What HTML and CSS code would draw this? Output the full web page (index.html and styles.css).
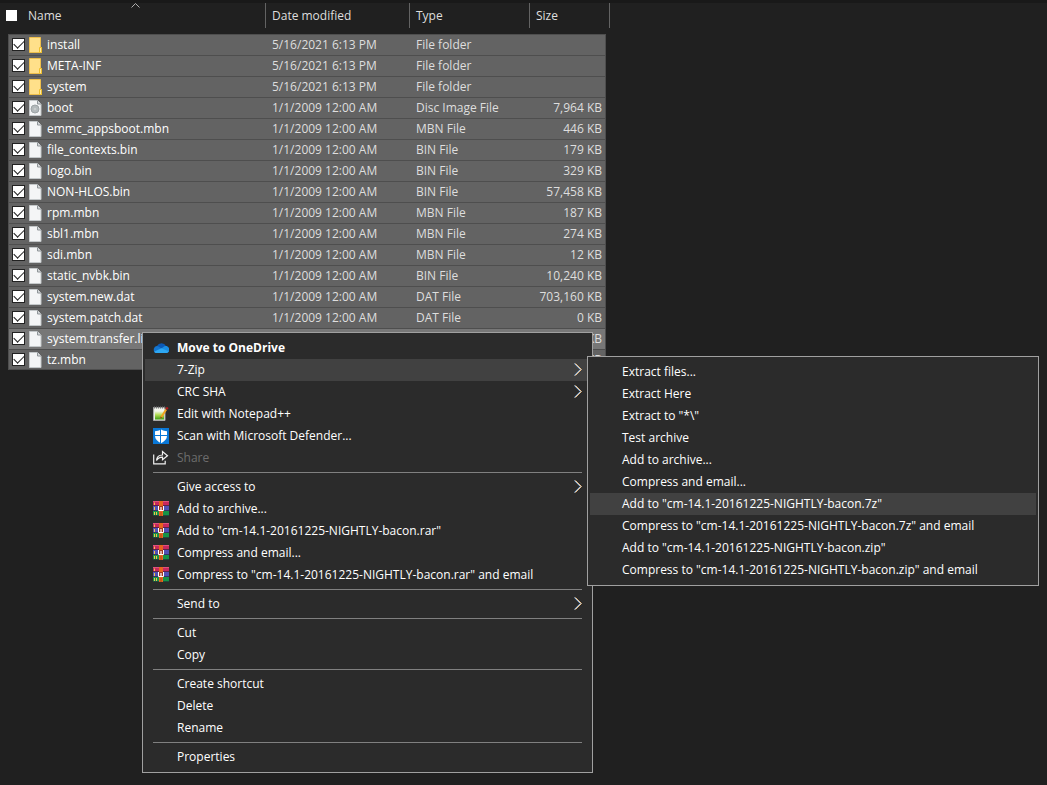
FILE: index.html
```
<!DOCTYPE html>
<html lang="en">
<head>
<meta charset="utf-8">
<title>File list</title>
<link rel="stylesheet" href="styles.css">
</head>
<body>
<svg class="sprite" aria-hidden="true">
  <symbol id="folder" viewBox="0 0 13 16">
    <path d="M.5.5h11v9.500l1 .8v4.700H.5z" fill="#ffe08a" stroke="#eebf4c"/>
    <path d="M10.500 10.500h2v5h-2z" fill="#ffe9a8" stroke="#eebf2c"/>
  </symbol>
  <symbol id="file" viewBox="0 0 13 16">
    <path d="M.5.5h8l3.500 3.500v11.500H.5z" fill="#f4f5f6" stroke="#c4c8ca"/>
    <path d="M8.500.5v3.500H12" fill="#d5d8da" stroke="#8f9598"/>
  </symbol>
  <symbol id="disc" viewBox="0 0 13 16">
    <use href="#file" width="13" height="16"/>
    <circle cx="6" cy="9" r="4" fill="#b3b9bb" stroke="#9da3a5"/>
    <circle cx="6" cy="9" r="1.300" fill="#c8cccd"/>
  </symbol>
  <symbol id="onedrive" viewBox="0 0 16 16">
    <path d="M4 6a5 5 0 0 1 9 0l-5 3-5-1z" fill="#0c59b5"/>
    <path d="M3.500 13A3.400 3.400 0 1 1 5 6.200L11 10z" fill="#1476d1"/>
    <path d="M8 8.800 11 6.400c2-1 3.700-.2 4 .7A3.200 3.200 0 0 1 13.500 13z" fill="#1b8de2"/>
    <path d="M1 11.800 8.300 8.300l7.200 3c-.3 1.100-1 1.700-2 1.700h-10c-1 0-2-.400-2.500-1.200z" fill="#2ea7f2"/>
  </symbol>
  <symbol id="notepad" viewBox="0 0 16 16">
    <linearGradient id="page" x2="0" y2="1">
      <stop offset=".2" stop-color="#f4f6ee"/>
      <stop offset=".55" stop-color="#b4dd55"/>
      <stop offset="1" stop-color="#3f9a12"/>
    </linearGradient>
    <path d="M.5 1.500h11.500v13H.5z" fill="#e9eee4" stroke="#a8a8a8"/>
    <path d="M2 3h9v10.500H2z" fill="url(#page)"/>
    <path d="M1 1.500h11" stroke="#777" stroke-width="2" stroke-dasharray="1 1"/>
    <path d="m7.500 10.500 4.800-7.500 1.700 1-4.800 7.500-2 1.300z" fill="#f0a31d"/>
    <path d="m7.500 10.500 1.700 1-2 1.300z" fill="#7a4b18"/>
    <path d="m12.500 2.700 1.200-1.900 1.900 1.100-1.300 1.900z" fill="#b81b1b"/>
  </symbol>
  <symbol id="defender" viewBox="0 0 16 16">
    <path d="M0 0h16v16H0z" fill="#0a78d7"/>
    <path d="M8 1.500c2 1.300 4 1.700 6 1.700V8c0 3-2.500 5.500-6 7.200C4.500 13.500 2 11 2 8V3.200c2 0 4-.4 6-1.700z" fill="#fff"/>
    <path d="M7.500 1v15M1 7.500h14" stroke="#0a78d7"/>
  </symbol>
  <symbol id="share" viewBox="0 0 16 16">
    <path d="M.7 4.500v9.300h11.500v-3M3.500 10.500c.3-4 2.700-5.500 6-5.500V1.500l5 4.200-5 4V7.200c-2.500 0-4.500.8-6 3.300z" fill="none" stroke="#f0f0f0" stroke-width="1.200"/>
  </symbol>
  <symbol id="rar" viewBox="0 0 16 16">
    <path d="M0 0h16v5H0z" fill="#c8285e"/>
    <path d="M0 5h16v5H0z" fill="#5150b4"/>
    <path d="M0 10h16v5H0z" fill="#169447"/>
    <path d="M0 .5h16" stroke="#e0527c"/>
    <path d="M0 4.500h16M0 9.500h16M0 14.500h16" stroke="#23223c" stroke-opacity=".65"/>
    <path d="M1.500 1.500V4M1.500 6v3M1.500 11v3M3.500 11v3" stroke="#f3c34c"/>
    <path d="M6 0h4v15H6z" fill="#e8641f"/>
    <path d="M5 5h6v5H5z" fill="#a33a20"/>
    <path d="M5.500 5v4.500h5V5" fill="none" stroke="#fff"/>
    <path d="M8 6v3" stroke="#fff" stroke-width="1.200"/>
    <path d="M8 11v4" stroke="#a84a17"/>
  </symbol>
  <symbol id="chevron" viewBox="0 0 8 14">
    <path d="m.3.500 6 6-6 6" fill="none" stroke="#5aa0e8"/>
    <path d="m1.500.500 6 6-6 6" fill="none" stroke="#f0a850"/>
    <path d="m.9.500 6 6-6 6" fill="none" stroke="#f4f4f4" stroke-width=".8"/>
  </symbol>
  <symbol id="sort" viewBox="0 0 9 5">
    <path d="m.5 4.500 4-4 4 4" fill="none" stroke="#b0b0b0"/>
  </symbol>
</svg>

<main class="explorer">
<table class="files">
  <colgroup><col class="c-edge"><col class="c-name"><col class="c-date"><col class="c-type"><col class="c-size"><col class="c-end"></colgroup>
  <thead>
    <tr>
      <th colspan="2" scope="col"><div class="head-name"><input class="all" type="checkbox" aria-label="Select all">Name<svg class="sort"><use href="#sort"/></svg></div></th>
      <th scope="col">Date modified</th>
      <th scope="col">Type</th>
      <th scope="col" colspan="2">Size</th>
    </tr>
  </thead>
  <tbody>
    <tr><td></td><td><label class="entry"><input class="tick" type="checkbox" checked><svg class="kind"><use href="#folder"/></svg>install</label></td><td>5/16/2021 6:13 PM</td><td>File folder</td><td></td><td></td></tr>
    <tr><td></td><td><label class="entry"><input class="tick" type="checkbox" checked><svg class="kind"><use href="#folder"/></svg>META-INF</label></td><td>5/16/2021 6:13 PM</td><td>File folder</td><td></td><td></td></tr>
    <tr><td></td><td><label class="entry"><input class="tick" type="checkbox" checked><svg class="kind"><use href="#folder"/></svg>system</label></td><td>5/16/2021 6:13 PM</td><td>File folder</td><td></td><td></td></tr>
    <tr><td></td><td><label class="entry"><input class="tick" type="checkbox" checked><svg class="kind"><use href="#disc"/></svg>boot</label></td><td>1/1/2009 12:00 AM</td><td>Disc Image File</td><td>7,964 KB</td><td></td></tr>
    <tr><td></td><td><label class="entry"><input class="tick" type="checkbox" checked><svg class="kind"><use href="#file"/></svg>emmc_appsboot.mbn</label></td><td>1/1/2009 12:00 AM</td><td>MBN File</td><td>446 KB</td><td></td></tr>
    <tr><td></td><td><label class="entry"><input class="tick" type="checkbox" checked><svg class="kind"><use href="#file"/></svg>file_contexts.bin</label></td><td>1/1/2009 12:00 AM</td><td>BIN File</td><td>179 KB</td><td></td></tr>
    <tr><td></td><td><label class="entry"><input class="tick" type="checkbox" checked><svg class="kind"><use href="#file"/></svg>logo.bin</label></td><td>1/1/2009 12:00 AM</td><td>BIN File</td><td>329 KB</td><td></td></tr>
    <tr><td></td><td><label class="entry"><input class="tick" type="checkbox" checked><svg class="kind"><use href="#file"/></svg>NON-HLOS.bin</label></td><td>1/1/2009 12:00 AM</td><td>BIN File</td><td>57,458 KB</td><td></td></tr>
    <tr><td></td><td><label class="entry"><input class="tick" type="checkbox" checked><svg class="kind"><use href="#file"/></svg>rpm.mbn</label></td><td>1/1/2009 12:00 AM</td><td>MBN File</td><td>187 KB</td><td></td></tr>
    <tr><td></td><td><label class="entry"><input class="tick" type="checkbox" checked><svg class="kind"><use href="#file"/></svg>sbl1.mbn</label></td><td>1/1/2009 12:00 AM</td><td>MBN File</td><td>274 KB</td><td></td></tr>
    <tr><td></td><td><label class="entry"><input class="tick" type="checkbox" checked><svg class="kind"><use href="#file"/></svg>sdi.mbn</label></td><td>1/1/2009 12:00 AM</td><td>MBN File</td><td>12 KB</td><td></td></tr>
    <tr><td></td><td><label class="entry"><input class="tick" type="checkbox" checked><svg class="kind"><use href="#file"/></svg>static_nvbk.bin</label></td><td>1/1/2009 12:00 AM</td><td>BIN File</td><td>10,240 KB</td><td></td></tr>
    <tr><td></td><td><label class="entry"><input class="tick" type="checkbox" checked><svg class="kind"><use href="#file"/></svg>system.new.dat</label></td><td>1/1/2009 12:00 AM</td><td>DAT File</td><td>703,160 KB</td><td></td></tr>
    <tr><td></td><td><label class="entry"><input class="tick" type="checkbox" checked><svg class="kind"><use href="#file"/></svg>system.patch.dat</label></td><td>1/1/2009 12:00 AM</td><td>DAT File</td><td>0 KB</td><td></td></tr>
    <tr class="focus"><td></td><td><label class="entry"><input class="tick" type="checkbox" checked><svg class="kind"><use href="#file"/></svg>system.transfer.list</label></td><td></td><td></td><td>KB</td><td></td></tr>
    <tr><td></td><td><label class="entry"><input class="tick" type="checkbox" checked><svg class="kind"><use href="#file"/></svg>tz.mbn</label></td><td></td><td></td><td>KB</td><td></td></tr>
  </tbody>
</table>
</main>

<div class="menu context" role="menu">
  <button class="item default" role="menuitem"><svg class="icon"><use href="#onedrive"/></svg><span>Move to OneDrive</span></button>
  <button class="item active" role="menuitem"><span>7-Zip</span><svg class="more"><use href="#chevron"/></svg></button>
  <button class="item" role="menuitem"><span>CRC SHA</span><svg class="more"><use href="#chevron"/></svg></button>
  <button class="item" role="menuitem"><svg class="icon"><use href="#notepad"/></svg><span>Edit with Notepad++</span></button>
  <button class="item" role="menuitem"><svg class="icon"><use href="#defender"/></svg><span>Scan with Microsoft Defender...</span></button>
  <button class="item" role="menuitem" disabled><svg class="icon"><use href="#share"/></svg><span>Share</span></button>
  <hr>
  <button class="item" role="menuitem"><span>Give access to</span><svg class="more"><use href="#chevron"/></svg></button>
  <button class="item" role="menuitem"><svg class="icon"><use href="#rar"/></svg><span>Add to archive...</span></button>
  <button class="item" role="menuitem"><svg class="icon"><use href="#rar"/></svg><span>Add to "cm-14.1-20161225-NIGHTLY-bacon.rar"</span></button>
  <button class="item" role="menuitem"><svg class="icon"><use href="#rar"/></svg><span>Compress and email...</span></button>
  <button class="item" role="menuitem"><svg class="icon"><use href="#rar"/></svg><span>Compress to "cm-14.1-20161225-NIGHTLY-bacon.rar" and email</span></button>
  <hr>
  <button class="item" role="menuitem"><span>Send to</span><svg class="more"><use href="#chevron"/></svg></button>
  <hr>
  <button class="item" role="menuitem"><span>Cut</span></button>
  <button class="item" role="menuitem"><span>Copy</span></button>
  <hr>
  <button class="item" role="menuitem"><span>Create shortcut</span></button>
  <button class="item" role="menuitem"><span>Delete</span></button>
  <button class="item" role="menuitem"><span>Rename</span></button>
  <hr>
  <button class="item" role="menuitem"><span>Properties</span></button>
</div>

<div class="menu submenu" role="menu">
  <button class="item" role="menuitem"><span>Extract files...</span></button>
  <button class="item" role="menuitem"><span>Extract Here</span></button>
  <button class="item" role="menuitem"><span>Extract to "*\"</span></button>
  <button class="item" role="menuitem"><span>Test archive</span></button>
  <button class="item" role="menuitem"><span>Add to archive...</span></button>
  <button class="item" role="menuitem"><span>Compress and email...</span></button>
  <button class="item active" role="menuitem"><span>Add to "cm-14.1-20161225-NIGHTLY-bacon.7z"</span></button>
  <button class="item" role="menuitem"><span>Compress to "cm-14.1-20161225-NIGHTLY-bacon.7z" and email</span></button>
  <button class="item" role="menuitem"><span>Add to "cm-14.1-20161225-NIGHTLY-bacon.zip"</span></button>
  <button class="item" role="menuitem"><span>Compress to "cm-14.1-20161225-NIGHTLY-bacon.zip" and email</span></button>
</div>
</body>
</html>
```
FILE: styles.css
```
* { box-sizing: border-box; }

body {
  margin: 0;
  min-height: 100vh;
  background: #202020;
  color: #fff;
  font: 12px/16px "Open Sans", "Noto Sans", sans-serif;
}

.sprite { position: absolute; width: 0; height: 0; }

.explorer { border-top: 3px solid #191919; }

.files {
  width: 610px;
  table-layout: fixed;
  border-collapse: separate;
  border-spacing: 0;
}
.c-edge { width: 8px; }
.c-name { width: 258px; }
.c-date { width: 144px; }
.c-type { width: 120px; }
.c-size { width: 76px; }
.c-end { width: 4px; }

.files th {
  height: 25px;
  padding: 0 6px;
  border-right: 1px solid #636363;
  font-weight: 400;
  text-align: left;
  color: #dedede;
}
.head-name { display: flex; align-items: center; gap: 11px; position: relative; }
.sort { position: absolute; left: 125px; top: -5px; width: 9px; height: 5px; }

.files thead::after { content: ""; display: block; height: 6px; }

.files td {
  height: 21px;
  padding: 0 6px;
  background: #636363;
  border-top: 1px solid #4e4e4e;
  color: #dedede;
  white-space: nowrap;
}
.files td:nth-child(2) { padding: 0 3px; border-left: 1px solid #4e4e4e; overflow: hidden; }
.files td:nth-child(5) { padding: 0 3px; border-right: 1px solid #4e4e4e; text-align: right; }
.files td:first-child, .files td:last-child { padding: 0; background: none; border: 0; }
.files .focus td:not(:first-child, :last-child) { background: #777; }
.files tbody tr:last-child td:not(:first-child, :last-child) { border-bottom: 1px solid #4e4e4e; }

.entry { display: flex; align-items: center; color: #fff; }
.kind { width: 13px; height: 16px; margin: 0 5px 0 4px; flex: none; }

.all, .tick { appearance: none; margin: 0; flex: none; background: #fff; }
.all { width: 11px; height: 11px; }
.tick {
  display: grid;
  place-items: center;
  width: 13px;
  height: 13px;
  margin-bottom: 1px;
  border: 1px solid #222;
}
.tick:checked::before {
  content: "";
  width: 9px;
  height: 5px;
  margin-bottom: 3px;
  border: solid #222;
  border-width: 0 0 1px 1px;
  transform: rotate(-45deg);
}

.menu {
  position: absolute;
  padding: 4px 2px;
  background: #2b2b2b;
  border: 1px solid #a0a0a0;
}
.context { left: 142px; top: 332px; width: 451px; }
.submenu { left: 587px; top: 356px; width: 452px; }

.item {
  display: grid;
  grid-template-columns: 16px 1fr 8px;
  column-gap: 8px;
  align-items: center;
  width: 100%;
  height: 22px;
  padding: 0 8px;
  border: 0;
  background: none;
  color: #fff;
  font: inherit;
  text-align: left;
  white-space: nowrap;
}
.item span { grid-column: 2; grid-row: 1; }
.item.default { font-weight: 700; }
.item.active { background: #414141; }
.item:disabled { color: #6d6d6d; }
.icon { width: 16px; height: 16px; grid-column: 1; grid-row: 1; }
.more { width: 8px; height: 14px; grid-column: 3; grid-row: 1; }

.menu hr {
  height: 1px;
  margin: 3px 8px;
  border: 0;
  background: #808080;
}
```
